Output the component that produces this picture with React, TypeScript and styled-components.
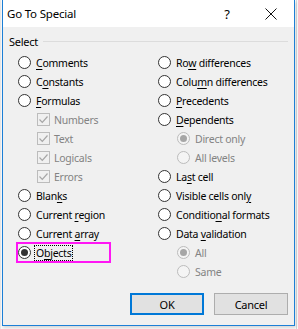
import styled, { createGlobalStyle } from 'styled-components';

const GlobalStyle = createGlobalStyle`
  html, body {
    margin: 0;
    padding: 0;
    background: #ffffff;
  }
  body {
    font-family: "Noto Sans", "Liberation Sans", sans-serif;
    font-size: 10.5px;
    letter-spacing: -0.25px;
    color: #000;
  }
`

interface Option {
    label: string;
    key?: number;
    kind: 'radio' | 'check';
    sub?: boolean;
    disabled?: boolean;
    checked?: boolean;
    focus?: boolean;
}

const leftOptions: Option[] = [
    { label: 'Comments', key: 0, kind: 'radio' },
    { label: 'Constants', key: 1, kind: 'radio' },
    { label: 'Formulas', key: 0, kind: 'radio' },
    { label: 'Numbers', kind: 'check', sub: true, disabled: true, checked: true },
    { label: 'Text', kind: 'check', sub: true, disabled: true, checked: true },
    { label: 'Logicals', kind: 'check', sub: true, disabled: true, checked: true },
    { label: 'Errors', kind: 'check', sub: true, disabled: true, checked: true },
    { label: 'Blanks', key: 4, kind: 'radio' },
    { label: 'Current region', key: 8, kind: 'radio' },
    { label: 'Current array', key: 8, kind: 'radio' },
    { label: 'Objects', key: 1, kind: 'radio', checked: true, focus: true },
]

const rightOptions: Option[] = [
    { label: 'Row differences', key: 2, kind: 'radio' },
    { label: 'Column differences', key: 4, kind: 'radio' },
    { label: 'Precedents', key: 0, kind: 'radio' },
    { label: 'Dependents', key: 0, kind: 'radio' },
    { label: 'Direct only', kind: 'radio', sub: true, disabled: true, checked: true },
    { label: 'All levels', kind: 'radio', sub: true, disabled: true },
    { label: 'Last cell', key: 2, kind: 'radio' },
    { label: 'Visible cells only', key: 17, kind: 'radio' },
    { label: 'Conditional formats', key: 8, kind: 'radio' },
    { label: 'Data validation', key: 5, kind: 'radio' },
    { label: 'All', kind: 'radio', sub: true, disabled: true, checked: true },
    { label: 'Same', kind: 'radio', sub: true, disabled: true },
]

const Label = ({ text, k }: { text: string; k?: number }) => {
    if (k === undefined) return <>{text}</>
    return (
        <>
            {text.slice(0, k)}
            <AccessKey>{text[k]}</AccessKey>
            {text.slice(k + 1)}
        </>
    )
}

const OptionRow = ({ opt }: { opt: Option }) => (
    <Row sub={!!opt.sub} highlight={!!opt.focus}>
        {opt.kind === 'radio' ? (
            <RadioCircle disabled={!!opt.disabled}>
                {opt.checked && <RadioDot disabled={!!opt.disabled} />}
            </RadioCircle>
        ) : (
            <CheckBox disabled={!!opt.disabled}>
                {opt.checked && (
                    <svg width="11" height="11" viewBox="0 0 11 11">
                        <path d="M1.5 5.5 L4.3 8.3 L9.5 2.5" fill="none" stroke={opt.disabled ? '#a6a6a6' : '#333'} strokeWidth="1.2" />
                    </svg>
                )}
            </CheckBox>
        )}
        <OptionText disabled={!!opt.disabled} focus={!!opt.focus} kind={opt.kind}>
            <Label text={opt.label} k={opt.key} />
        </OptionText>
    </Row>
)

const App = () => {
    return (
        <Page>
            <GlobalStyle />
            <Dialog>
                <TitleBar>
                    <Title>Go To Special</Title>
                    <HelpButton>?</HelpButton>
                    <CloseButton>
                        <svg width="12" height="12" viewBox="0 0 12 12">
                            <path d="M0.5 0.5 L11.5 11.5 M11.5 0.5 L0.5 11.5" stroke="#111" strokeWidth="1" />
                        </svg>
                    </CloseButton>
                </TitleBar>
                <Body>
                    <GroupHeader>
                        <span>Select</span>
                        <GroupLine />
                    </GroupHeader>
                    <Columns>
                        <Column>
                            {leftOptions.map(o => <OptionRow key={o.label} opt={o} />)}
                        </Column>
                        <Column>
                            {rightOptions.map(o => <OptionRow key={o.label} opt={o} />)}
                        </Column>
                    </Columns>
                    <Buttons>
                        <Button primary>OK</Button>
                        <Button>Cancel</Button>
                    </Buttons>
                </Body>
            </Dialog>
        </Page>
    );
}

export default App;

const Page = styled.div`
  width: 298px;
  height: 329px;
  overflow: hidden;
  background:
    linear-gradient(#e8e8e8, #e8e8e8) 0 0 / 1px 100% no-repeat,
    linear-gradient(#d8d8d8, #d8d8d8) 296px 0 / 1px 100% no-repeat,
    #fbfbfb;
`

const Dialog = styled.div`
  margin-left: 2px;
  width: 291px;
  height: 325px;
  display: flex;
  flex-direction: column;
  border: 1px solid #1c7fd6;
  border-top: none;
  background: #f0f0f0;
  box-shadow: 1px 2px 3px rgba(0, 0, 0, 0.15);
`

const TitleBar = styled.div`
  height: 27px;
  flex-shrink: 0;
  display: flex;
  align-items: center;
  background: #ffffff;
  padding-left: 4px;
`

const Title = styled.div`
  font-size: 11.5px;
  letter-spacing: -0.2px;
  flex: 1;
  margin-top: -1px;
`

const HelpButton = styled.div`
  font-size: 13px;
  width: 46px;
  text-align: center;
  margin-right: -2px;
`

const CloseButton = styled.div`
  width: 46px;
  height: 27px;
  display: flex;
  align-items: center;
  justify-content: center;
`

const Body = styled.div`
  flex: 1;
  display: flex;
  flex-direction: column;
  padding: 7px 6px 0 6px;
`

const GroupHeader = styled.div`
  display: flex;
  align-items: center;
  height: 14px;
  font-size: 11px;
  gap: 5px;
`

const GroupLine = styled.div`
  flex: 1;
  height: 1px;
  background: #dcdcdc;
`

const Columns = styled.div`
  display: grid;
  grid-template-columns: 140px 1fr;
  padding-left: 9px;
  margin-top: 5px;
`

const Column = styled.div`
  display: flex;
  flex-direction: column;
`

interface RowProps {
    sub: boolean;
    highlight: boolean;
}

const Row = styled.div<RowProps>`
  height: 19px;
  display: flex;
  align-items: center;
  box-sizing: border-box;
  padding-left: ${props => props.sub ? '19px' : props.highlight ? '1px' : '0'};
  width: ${props => props.highlight ? '93px' : 'auto'};
  outline: ${props => props.highlight ? '2px solid #ff16f4' : 'none'};
  outline-offset: ${props => props.highlight ? '-1px' : '0'};
  margin-left: ${props => props.highlight ? '-1px' : '0'};
`

interface DisabledProp {
    disabled: boolean;
}

const RadioCircle = styled.span<DisabledProp>`
  width: 13px;
  height: 13px;
  box-sizing: border-box;
  border-radius: 50%;
  border: 1px solid ${props => props.disabled ? '#bcbcbc' : '#333333'};
  background: ${props => props.disabled ? '#f4f4f4' : '#ffffff'};
  display: flex;
  align-items: center;
  justify-content: center;
  flex-shrink: 0;
`

const RadioDot = styled.span<DisabledProp>`
  width: 7px;
  height: 7px;
  border-radius: 50%;
  background: ${props => props.disabled ? '#a6a6a6' : '#333333'};
`

const CheckBox = styled.span<DisabledProp>`
  width: 13px;
  height: 13px;
  box-sizing: border-box;
  border: 1px solid ${props => props.disabled ? '#bcbcbc' : '#333333'};
  background: ${props => props.disabled ? '#f0f0f0' : '#ffffff'};
  display: flex;
  align-items: center;
  justify-content: center;
  flex-shrink: 0;
`

interface OptionTextProps {
    disabled: boolean;
    focus: boolean;
    kind: 'radio' | 'check';
}

const OptionText = styled.span<OptionTextProps>`
  margin-left: ${props => props.kind === 'check' ? '2px' : '3px'};
  padding: 0 1px;
  line-height: 14px;
  white-space: nowrap;
  color: ${props => props.disabled ? '#838383' : '#000000'};
  border: 1px dotted ${props => props.focus ? '#000' : 'transparent'};
`

const AccessKey = styled.span`
  text-decoration: underline;
  text-underline-offset: 2px;
`

const Buttons = styled.div`
  display: flex;
  justify-content: flex-end;
  gap: 10px;
  margin-top: 12px;
`

interface ButtonProp {
    primary?: boolean;
}

const Button = styled.div<ButtonProp>`
  width: 74px;
  height: 22px;
  box-sizing: border-box;
  display: flex;
  align-items: center;
  justify-content: center;
  font-size: 11px;
  background: #e1e1e1;
  border: ${props => props.primary ? '2px solid #0078d7' : '1px solid #adadad'};
`
